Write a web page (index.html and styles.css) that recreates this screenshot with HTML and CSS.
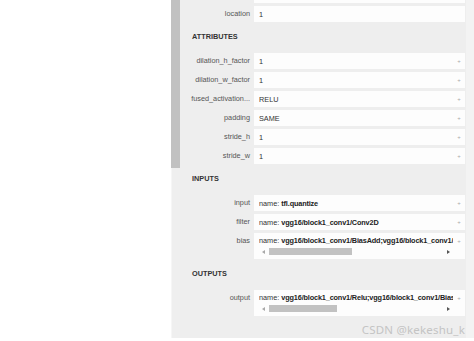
FILE: index.html
```html
<!DOCTYPE html>
<html lang="en">
<head>
	<meta charset="UTF-8">
	<title>Node Properties</title>
	<link rel="stylesheet" href="styles.css">
</head>
<body>
	<div class="page">
		<div class="blank"></div>
		<div class="vscroll"><div class="vthumb"></div></div>
		<div class="panel">
			<div class="row cut">
				<div class="label"></div>
				<div class="box"></div>
			</div>
			<div class="row">
				<div class="label">location</div>
				<div class="box"><span class="val">1</span></div>
			</div>

			<div class="head">ATTRIBUTES</div>
			<div class="row">
				<div class="label">dilation_h_factor</div>
				<div class="box"><span class="val">1</span><span class="plus">+</span></div>
			</div>
			<div class="row">
				<div class="label">dilation_w_factor</div>
				<div class="box"><span class="val">1</span><span class="plus">+</span></div>
			</div>
			<div class="row">
				<div class="label">fused_activation...</div>
				<div class="box"><span class="val">RELU</span><span class="plus">+</span></div>
			</div>
			<div class="row">
				<div class="label">padding</div>
				<div class="box"><span class="val">SAME</span><span class="plus">+</span></div>
			</div>
			<div class="row">
				<div class="label">stride_h</div>
				<div class="box"><span class="val">1</span><span class="plus">+</span></div>
			</div>
			<div class="row">
				<div class="label">stride_w</div>
				<div class="box"><span class="val">1</span><span class="plus">+</span></div>
			</div>

			<div class="head">INPUTS</div>
			<div class="row">
				<div class="label">input</div>
				<div class="box"><span class="val">name: <b>tfl.quantize</b></span><span class="plus">+</span></div>
			</div>
			<div class="row">
				<div class="label">filter</div>
				<div class="box"><span class="val">name: <b>vgg16/block1_conv1/Conv2D</b></span><span class="plus">+</span></div>
			</div>
			<div class="row tall">
				<div class="label">bias</div>
				<div class="box">
					<div class="line"><span class="val">name: <b>vgg16/block1_conv1/BiasAdd;vgg16/block1_conv1/BiasAdd/ReadVariableOp</b></span><span class="plus">+</span></div>
					<div class="hscroll">
						<span class="arr-l"></span>
						<div class="track"><div class="hthumb" style="width:83px"></div></div>
						<span class="arr-r"></span>
					</div>
				</div>
			</div>

			<div class="head">OUTPUTS</div>
			<div class="row tall">
				<div class="label">output</div>
				<div class="box">
					<div class="line"><span class="val">name: <b>vgg16/block1_conv1/Relu;vgg16/block1_conv1/BiasAdd;vgg16/block1_conv1/Conv2D</b></span><span class="plus">+</span></div>
					<div class="hscroll">
						<span class="arr-l"></span>
						<div class="track"><div class="hthumb" style="width:68px"></div></div>
						<span class="arr-r"></span>
					</div>
				</div>
			</div>

			<div class="mark">CSDN @kekeshu_k</div>
		</div>
		<div class="pscroll"></div>
	</div>
</body>
</html>
```

FILE: styles.css
```css
*{
	padding:0;
	margin:0;
	box-sizing:border-box;
}
body{
	background:#fff;
	font-family:"Liberation Sans", Arial, sans-serif;
	font-size:7.3px;
	color:#444;
}
.page{
	display:flex;
	height:338px;
}
.blank{
	width:171px;
	background:#fff;
}
.vscroll{
	width:9px;
	background:#efefef;
	border-left:1px solid #f6f6f6;
}
.vthumb{
	height:168px;
	background:#c1c1c1;
	margin-left:-1px;
}
.panel{
	width:286px;
	background:#eeeeee;
	position:relative;
	overflow:hidden;
}
.pscroll{
	width:8px;
	background:#f3f3f3;
}
.row{
	display:grid;
	grid-template-columns:70px 211px;
	column-gap:4px;
	height:16px;
	margin-bottom:3px;
}
.row.cut{
	height:3px;
	overflow:hidden;
}
.row.tall{
	height:26px;
}
.label{
	text-align:right;
	line-height:16px;
	color:#555;
	white-space:nowrap;
}
.box{
	background:#fdfdfd;
	display:flex;
	align-items:center;
	padding-left:5px;
	color:#333;
	overflow:hidden;
}
.row.tall .box{
	display:block;
}
.line{
	display:flex;
	align-items:center;
	height:15px;
}
.val{
	flex:1;
	white-space:nowrap;
	overflow:hidden;
	line-height:15px;
}
.val b{
	color:#222;
	letter-spacing:-0.15px;
}
.plus{
	width:12px;
	text-align:center;
	font-size:6px;
	color:#aaa;
}
.hscroll{
	display:flex;
	align-items:center;
	height:7px;
	padding-left:3px;
	padding-right:15px;
}
.track{
	flex:1;
	height:7px;
	margin:0 3px 0 4px;
}
.hthumb{
	height:7px;
	background:#c2c2c2;
}
.arr-l{
	width:0;
	height:0;
	border-top:2px solid transparent;
	border-bottom:2px solid transparent;
	border-right:3px solid #a8a8a8;
}
.arr-r{
	width:0;
	height:0;
	border-top:2px solid transparent;
	border-bottom:2px solid transparent;
	border-left:3px solid #555;
}
.head{
	height:28px;
	padding:6px 0 0 12px;
	line-height:12px;
	font-weight:bold;
	color:#333;
}
.mark{
	position:absolute;
	right:1px;
	bottom:1px;
	font-family:"Noto Sans", "Liberation Sans", sans-serif;
	font-size:11.5px;
	color:#c4c4c4;
	letter-spacing:0.2px;
}
```
